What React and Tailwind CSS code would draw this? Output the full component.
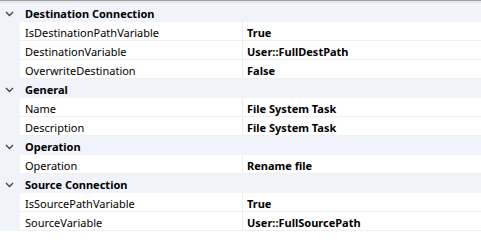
const groups = [
  {
    title: "Destination Connection",
    rows: [
      ["IsDestinationPathVariable", "True"],
      ["DestinationVariable", "User::FullDestPath"],
      ["OverwriteDestination", "False"],
    ],
  },
  {
    title: "General",
    rows: [
      ["Name", "File System Task"],
      ["Description", "File System Task"],
    ],
  },
  {
    title: "Operation",
    rows: [["Operation", "Rename file"]],
  },
  {
    title: "Source Connection",
    rows: [
      ["IsSourcePathVariable", "True"],
      ["SourceVariable", "User::FullSourcePath"],
    ],
  },
];

function Chevron() {
  return (
    <svg width="9" height="6" viewBox="0 0 9 6" className="ml-[5px] mr-[11px]">
      <path d="M1 1 L4.5 4.5 L8 1" fill="none" stroke="#404040" strokeWidth="1.3" />
    </svg>
  );
}

export default function App() {
  return (
    <div
      className="w-[481px] h-[249px] bg-white text-black text-[11px] leading-none"
      style={{ fontFamily: '"Noto Sans", "Open Sans", sans-serif' }}
    >
      <div className="h-[1px] bg-[#a0a0a0]" />
      <div className="h-[2px] bg-[#e4e6ea]" />
      {groups.map((g) => (
        <div key={g.title}>
          <div className="h-[19px] flex items-center pt-[2px] bg-[#f0f3f9] font-bold">
            <Chevron />
            <span>{g.title}</span>
          </div>
          {g.rows.map(([k, v]) => (
            <div key={k} className="h-[19px] flex bg-[#f0f3f9]">
              <div className="w-[20px]" />
              <div className="flex-1 flex bg-white border-b border-[#f0f0f0]">
                <div className="w-[223px] pl-[5px] pt-[3px] flex items-center border-r border-[#ececec]">
                  {k}
                </div>
                <div className="flex-1 pl-[4px] pt-[3px] flex items-center font-bold">{v}</div>
              </div>
            </div>
          ))}
        </div>
      ))}
    </div>
  );
}
